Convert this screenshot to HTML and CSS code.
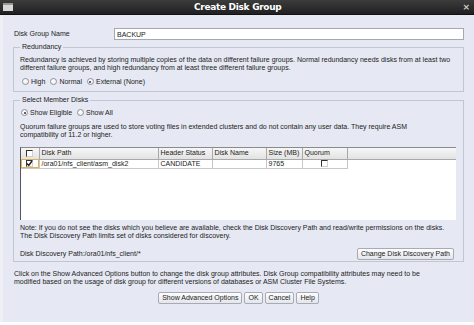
FILE: index.html
```html
<!DOCTYPE html>
<html lang="en">
<head>
  <meta charset="UTF-8">
  <title>Create Disk Group</title>
  <link rel="stylesheet" href="styles.css">
</head>
<body>
  <div class="dialog">
    <!-- Title bar -->
    <div class="titlebar">
      <span class="win-icon"></span>
      <span class="title">Create Disk Group</span>
      <span class="close">&#215;</span>
    </div>

    <div class="content">
      <div class="name-row">
        <label class="name-label" for="dg-name">Disk Group Name</label>
        <input class="text-input" id="dg-name" type="text" value="BACKUP">
      </div>

      <!-- Redundancy -->
      <fieldset class="group">
        <legend>Redundancy</legend>
        <p class="info first">Redundancy is achieved by storing multiple copies of the data on different failure groups. Normal redundancy needs disks from at least two different failure groups, and high redundancy from at least three different failure groups.</p>
        <div class="radio-row redundancy-row">
          <span class="radio"></span><span class="radio-text">High</span>
          <span class="radio"></span><span class="radio-text">Normal</span>
          <span class="radio checked"></span><span class="radio-text">External (None)</span>
        </div>
      </fieldset>

      <!-- Member disks -->
      <fieldset class="group disks">
        <legend>Select Member Disks</legend>
        <div class="radio-row show-row">
          <span class="radio checked"></span><span class="radio-text">Show Eligible</span>
          <span class="radio"></span><span class="radio-text">Show All</span>
        </div>
        <p class="info quorum">Quorum failure groups are used to store voting files in extended clusters and do not contain any user data. They require ASM compatibility of 11.2 or higher.</p>

        <div class="disk-table">
          <table>
            <colgroup>
              <col class="c-check">
              <col class="c-path">
              <col class="c-status">
              <col class="c-name">
              <col class="c-size">
              <col class="c-quorum">
              <col>
            </colgroup>
            <thead>
              <tr>
                <th class="center"><span class="checkbox"></span></th>
                <th>Disk Path</th>
                <th>Header Status</th>
                <th>Disk Name</th>
                <th>Size (MB)</th>
                <th>Quorum</th>
                <th class="filler"></th>
              </tr>
            </thead>
            <tbody>
              <tr>
                <td class="center focus"><span class="checkbox checked"><svg viewBox="0 0 7 7" width="7" height="7"><polyline points="1,3.5 2.8,5.5 6,1" fill="none" stroke="#222" stroke-width="1.4"/></svg></span></td>
                <td>/ora01/nfs_client/asm_disk2</td>
                <td>CANDIDATE</td>
                <td></td>
                <td>9765</td>
                <td class="center"><span class="checkbox"></span></td>
                <td class="empty"></td>
              </tr>
            </tbody>
          </table>
        </div>

        <p class="info note">Note: If you do not see the disks which you believe are available, check the Disk Discovery Path and read/write permissions on the disks. The Disk Discovery Path limits set of disks considered for discovery.</p>
        <div class="discovery-row">
          <span>Disk Discovery Path:/ora01/nfs_client/*</span>
          <button class="btn" type="button">Change Disk Discovery Path</button>
        </div>
      </fieldset>

      <p class="info footer-text">Click on the Show Advanced Options button to change the disk group attributes. Disk Group compatibility attributes may need to be modified based on the usage of disk group for different versions of databases or ASM Cluster File Systems.</p>

      <div class="actions">
        <button class="btn" type="button">Show Advanced Options</button>
        <button class="btn" type="button">OK</button>
        <button class="btn" type="button">Cancel</button>
        <button class="btn" type="button">Help</button>
      </div>
    </div>
  </div>
</body>
</html>
```

FILE: styles.css
```css
/* General */
* {
  box-sizing: border-box;
}

body {
  margin: 0;
  background: #fff;
  font-family: "Liberation Sans", Arial, sans-serif;
  font-size: 7px;
  line-height: 8px;
  color: #222;
}

.dialog {
  width: 474px;
  height: 322px;
  background: #e6e9f3;
  border-left: 3px solid #eef0f6;
  display: flex;
  flex-direction: column;
}

/* Title bar */
.titlebar {
  height: 15px;
  margin-left: -3px;
  background: linear-gradient(#3c3c3c, #202020);
  border-bottom: 1px solid #111;
  display: flex;
  align-items: center;
  padding: 0 4px 0 3px;
  color: #fff;
}

.win-icon {
  width: 10px;
  height: 8px;
  background: #d8d8d8;
  border-top: 2px solid #9a9a9a;
}

.title {
  flex: 1;
  text-align: center;
  font: bold 9px "DejaVu Sans", sans-serif;
  letter-spacing: -0.3px;
}

.close {
  font: bold 9px "DejaVu Sans", sans-serif;
  color: #ccc;
}

/* Content */
.content {
  flex: 1;
  padding: 13px 10px 0 10px;
}

.name-row {
  display: flex;
  align-items: center;
  height: 12px;
}

.name-label {
  width: 101px;
  padding-left: 1px;
}

.text-input {
  flex: 1;
  height: 12px;
  border: 1px solid #a3a8b2;
  background: #fff;
  font: inherit;
  padding: 0 2px;
  color: #222;
}

.group {
  margin: 3px 0 0;
  padding: 0 7px 5px 6px;
  border: 1px solid #c2c6d0;
  min-width: 0;
}

.group legend {
  padding: 0 2px;
  line-height: 8px;
}

.info {
  margin: 0;
}

.info.first {
  margin-top: 5px;
}

.radio-row {
  display: flex;
  align-items: center;
  height: 9px;
}

.redundancy-row {
  margin-top: 5px;
  padding-left: 2px;
}

.radio {
  width: 7px;
  height: 7px;
  border-radius: 50%;
  border: 1px solid #8e939d;
  background: radial-gradient(circle at 40% 35%, #fff, #e8e8ee);
  margin-right: 2px;
  position: relative;
}

.radio.checked::after {
  content: "";
  position: absolute;
  left: 1.5px;
  top: 1.5px;
  width: 2px;
  height: 2px;
  border-radius: 50%;
  background: #333;
}

.radio-text {
  margin-right: 5px;
}

/* Member disks */
.disks {
  margin-top: 4px;
  padding-bottom: 1px;
}

.show-row {
  margin-top: 4px;
  padding-left: 1px;
}

.info.quorum {
  margin-top: 6px;
  max-width: 415px;
}

.disk-table {
  margin-top: 8px;
  height: 73px;
  background: #fff;
  border-left: 1px solid #555;
  border-top: 1px solid #8a8a8a;
}

.disk-table table {
  width: 100%;
  border-collapse: collapse;
  table-layout: fixed;
}

.c-check { width: 18px; }
.c-path { width: 119px; }
.c-status { width: 54px; }
.c-name { width: 54px; }
.c-size { width: 36px; }
.c-quorum { width: 45px; }

.disk-table th {
  height: 11px;
  padding: 0 0 0 2px;
  font-weight: normal;
  text-align: left;
  background: linear-gradient(#f6f6f6, #e2e2e2);
  border-right: 1px solid #a9a9a9;
  border-bottom: 1px solid #a9a9a9;
  white-space: nowrap;
}

.disk-table th.filler {
  border-right: none;
}

.disk-table td {
  height: 9px;
  padding: 0 0 0 2px;
  border-right: 1px solid #c8c8c8;
  border-bottom: 1px solid #c8c8c8;
  white-space: nowrap;
}

.disk-table td.empty {
  border: none;
}

.disk-table .center {
  text-align: center;
  padding: 0;
}

.disk-table td.focus {
  outline: 1px solid #d9b25a;
  outline-offset: -1px;
}

.checkbox {
  display: inline-block;
  vertical-align: middle;
  width: 7px;
  height: 7px;
  background: #fff;
  border-top: 1px solid #333;
  border-left: 1px solid #333;
  border-right: 1px solid #d0d0d0;
  border-bottom: 1px solid #d0d0d0;
  position: relative;
}

.checkbox svg {
  position: absolute;
  left: -1px;
  top: -1px;
}

.info.note {
  margin-top: 4px;
}

.discovery-row {
  display: flex;
  align-items: center;
  justify-content: space-between;
  margin-top: 8px;
  padding-right: 2px;
}

/* Buttons */
.btn {
  height: 12px;
  padding: 0 3px;
  font: inherit;
  line-height: 10px;
  color: #222;
  background: linear-gradient(#fdfdfe, #e4e6ec);
  border: 1px solid #a7abb4;
  border-radius: 2px;
}

.footer-text {
  margin-top: 8px;
  padding-left: 1px;
  max-width: 425px;
}

.actions {
  display: flex;
  justify-content: center;
  gap: 2px;
  margin-top: 6px;
}
```
